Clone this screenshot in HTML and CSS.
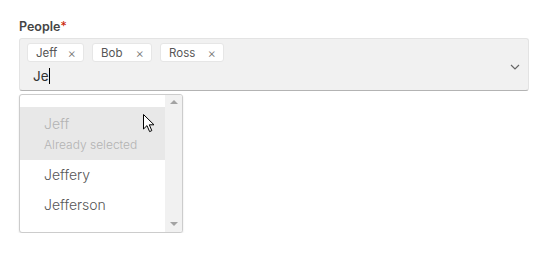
FILE: index.html
```html
<!DOCTYPE html>
<html lang="en">
<head>
  <meta charset="UTF-8">
  <title>People combobox</title>
  <link rel="stylesheet" href="styles.css">
</head>
<body>

  <div class="field">
    <label class="field-label">People<span class="required">*</span></label>

    <!-- Multi select box -->
    <div class="combo">
      <div class="combo-body">
        <div class="tags">
          <span class="tag">Jeff <span class="tag-x">&times;</span></span>
          <span class="tag">Bob <span class="tag-x">&times;</span></span>
          <span class="tag">Ross <span class="tag-x">&times;</span></span>
        </div>
        <div class="combo-input">Je<span class="caret"></span></div>
      </div>
      <svg class="chevron" width="10" height="6" viewBox="0 0 10 6">
        <path d="M1 1 L5 5 L9 1" fill="none" stroke="#666" stroke-width="1.2"/>
      </svg>
    </div>

    <!-- Options -->
    <div class="menu">
      <ul class="options">
        <li class="option disabled">
          <span>Jeff</span>
          <span class="hint">Already selected</span>
        </li>
        <li class="option">Jeffery</li>
        <li class="option">Jefferson</li>
      </ul>
      <div class="scrollbar">
        <span class="arrow up"></span>
        <span class="arrow down"></span>
      </div>
    </div>

    <svg class="pointer" width="13" height="19" viewBox="0 0 13 19">
      <path d="M0.5 0.5 L0.5 15 L4 11.6 L6.6 17.6 L8.8 16.6 L6.3 10.8 L11 10.8 Z" fill="#fff" stroke="#000" stroke-width="1" stroke-linejoin="round"/>
    </svg>
  </div>

</body>
</html>
```

FILE: styles.css
```css
body {
  margin: 0;
  font-family: Inter, Lato, sans-serif;
  background: #fff;
  color: #565656;
}
.field {
  position: relative;
  padding: 19px 19px 0 19px;
}
.field-label {
  display: block;
  font-size: 12.5px;
  font-weight: 600;
  color: #454545;
  line-height: 16px;
}
.required {
  color: #c92100;
  font-weight: 400;
}
.combo {
  margin-top: 3px;
  width: 510px;
  height: 53px;
  box-sizing: border-box;
  background: #f1f1f1;
  border: 1px solid #e3e3e3;
  border-bottom-color: #b3b3b3;
  border-radius: 3px;
  display: flex;
  align-items: center;
}
.combo-body {
  flex: 1;
  align-self: flex-start;
  padding: 4px 7px;
}
.tags {
  display: flex;
  gap: 8px;
}
.tag {
  display: flex;
  align-items: center;
  justify-content: space-between;
  height: 19px;
  box-sizing: border-box;
  padding: 0 7px 0 8px;
  background: #fff;
  border: 1px solid #e6e6e6;
  border-radius: 3px;
  font-size: 11.5px;
  color: #565656;
}
.tag:nth-child(1) { width: 57px; }
.tag:nth-child(2) { width: 60px; }
.tag:nth-child(3) { width: 64px; }
.tag-x {
  font-size: 13px;
  font-weight: 300;
  color: #777;
}
.combo-input {
  display: flex;
  align-items: center;
  margin: 5px 0 0 6px;
  font-size: 13.5px;
  color: #333;
  height: 17px;
}
.caret {
  display: inline-block;
  width: 1px;
  height: 16px;
  background: #000;
}
.chevron {
  margin: 4px 8px 0 0;
}
.menu {
  margin-top: 3px;
  width: 164px;
  height: 139px;
  box-sizing: border-box;
  border: 1px solid #ccc;
  border-radius: 3px;
  box-shadow: 0 1px 2px rgba(0, 0, 0, 0.12);
  display: flex;
  overflow: hidden;
  background: #fff;
}
.options {
  flex: 1;
  list-style: none;
  margin: 0;
  padding: 12px 0 0 0;
}
.option {
  height: 30px;
  line-height: 30px;
  padding-left: 24px;
  font-size: 14px;
  font-weight: 300;
  color: #565656;
}
.option.disabled {
  height: 53px;
  line-height: normal;
  background: #e8e8e8;
  color: #b3b3b3;
  display: flex;
  flex-direction: column;
  justify-content: center;
  gap: 5px;
}
.hint {
  font-size: 12px;
}
.scrollbar {
  width: 17px;
  background: #f1f1f1;
  display: flex;
  flex-direction: column;
  justify-content: space-between;
  align-items: center;
  padding: 5px 0 6px;
}
.arrow {
  width: 0;
  height: 0;
  border-left: 4px solid transparent;
  border-right: 4px solid transparent;
}
.arrow.up { border-bottom: 4px solid #a3a3a3; }
.arrow.down { border-top: 4px solid #a3a3a3; }
.pointer {
  position: absolute;
  left: 143px;
  top: 114px;
}
```
